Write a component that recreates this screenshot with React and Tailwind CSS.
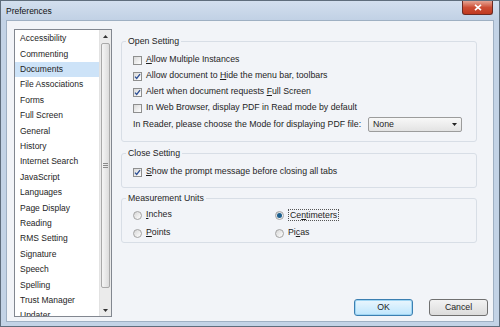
import React from "react";

const items = [
  "Accessibility",
  "Commenting",
  "Documents",
  "File Associations",
  "Forms",
  "Full Screen",
  "General",
  "History",
  "Internet Search",
  "JavaScript",
  "Languages",
  "Page Display",
  "Reading",
  "RMS Setting",
  "Signature",
  "Speech",
  "Spelling",
  "Trust Manager",
  "Updater",
];

function Check({ checked }) {
  return (
    <span className="w-[9px] h-[9px] shrink-0 border border-[#8e8f8f] bg-linear-to-br from-[#d9d9d9] to-white flex items-center justify-center">
      {checked && (
        <svg width="7" height="7" viewBox="0 0 7 7">
          <path d="M1 3.6 L2.7 5.4 L6 1.2" stroke="#2b4f96" strokeWidth="1.3" fill="none" />
        </svg>
      )}
    </span>
  );
}

function Radio({ checked }) {
  return (
    <span className="w-[9px] h-[9px] shrink-0 rounded-full border border-[#a3a3a3] bg-linear-to-br from-[#d6d6d6] to-white flex items-center justify-center">
      {checked && <span className="w-[5px] h-[5px] rounded-full bg-[#1d5f8e]" />}
    </span>
  );
}

function Row({ children, h = "h-[16px]" }) {
  return <div className={`${h} flex items-center gap-[4px]`}>{children}</div>;
}

function Group({ title, className, children }) {
  return (
    <fieldset className={`w-[356px] border border-[#d8dee6] rounded-[3px] pl-[4px] ${className}`}>
      <legend className="px-[2px] leading-[12px] text-[#1e1e1e]">{title}</legend>
      {children}
    </fieldset>
  );
}

function U({ children }) {
  return <span className="underline underline-offset-[1px]">{children}</span>;
}

export default function App() {
  return (
    <div
      className="w-[500px] h-[327px] bg-[#c3d3e6] border border-[#5f6d7c] flex flex-col overflow-hidden text-[#1e1e1e]"
      style={{ fontFamily: '"Liberation Sans", Arial, sans-serif' }}
    >
      {/* title bar */}
      <div className="h-[19px] flex items-center justify-between pl-[5px] pr-[6px] bg-linear-to-b from-[#d3dfee] to-[#c1d1e5]">
        <span className="text-[8.5px] text-[#111] pt-[1px]">Preferences</span>
        <div className="self-start w-[31px] h-[14px] rounded-b-[3px] border border-t-0 border-[#6b2a22] bg-linear-to-b from-[#e4a393] via-[#cc4d34] to-[#c0391f] flex items-center justify-center">
          <svg width="8" height="7" viewBox="0 0 8 7">
            <path d="M1 0.8 L7 6.2 M7 0.8 L1 6.2" stroke="white" strokeWidth="1.6" />
          </svg>
        </div>
      </div>

      {/* client area */}
      <div className="mx-[5px] h-[302px] bg-[#f2f4f8] border border-[#9fb0c3] flex pl-[7px] pt-[8px] text-[8.5px]">
        {/* list box */}
        <div className="w-[98px] h-[288px] border border-[#828790] bg-white flex">
          <div className="w-[84px] pt-[1px] overflow-hidden">
            {items.map((it) => (
              <div
                key={it}
                className={`h-[15.4px] flex items-center pl-[5px] whitespace-nowrap ${
                  it === "Documents" ? "bg-[#cde3f8]" : ""
                }`}
              >
                {it}
              </div>
            ))}
          </div>
          {/* scrollbar */}
          <div className="w-[12px] bg-[#ebebeb] border-l border-[#e2e2e2] flex flex-col">
            <div className="h-[12px] flex items-center justify-center">
              <svg width="5" height="3" viewBox="0 0 5 3">
                <path d="M0 3 L2.5 0 L5 3 Z" fill="#333" />
              </svg>
            </div>
            <div className="mt-[1px] mx-[1px] h-[245px] rounded-[2px] border border-[#a9a9a9] bg-linear-to-r from-[#f5f5f5] to-[#dcdcdc] flex flex-col items-center justify-center gap-[1px]">
              <span className="w-[5px] h-px bg-[#8a8a8a]" />
              <span className="w-[5px] h-px bg-[#8a8a8a]" />
              <span className="w-[5px] h-px bg-[#8a8a8a]" />
            </div>
            <div className="flex-1" />
            <div className="h-[12px] flex items-center justify-center">
              <svg width="5" height="3" viewBox="0 0 5 3">
                <path d="M0 0 L2.5 3 L5 0 Z" fill="#333" />
              </svg>
            </div>
          </div>
        </div>

        {/* right column */}
        <div className="w-[367px] h-[288px] ml-[9px] flex flex-col text-[8.75px]">
          <Group title="Open Setting" className="mt-[6px] pb-[8px]">
            <div className="ml-[7px] pt-[5px]">
              <Row>
                <Check />
                <span><U>A</U>llow Multiple Instances</span>
              </Row>
              <Row>
                <Check checked />
                <span>Allow document to <U>H</U>ide the menu bar, toolbars</span>
              </Row>
              <Row>
                <Check checked />
                <span>Alert when document requests <U>F</U>ull Screen</span>
              </Row>
              <Row>
                <Check />
                <span>In Web Browser, display PDF in Read mode by default</span>
              </Row>
              <div className="h-[17px] flex items-center">
                <span className="w-[235px] whitespace-nowrap">
                  In Reader, please choose the Mode for displaying PDF file:
                </span>
                <div className="w-[94px] h-[15px] border border-[#9c9c9c] rounded-[2px] bg-linear-to-b from-[#f8f8f8] to-[#e3e3e3] flex items-center justify-between pl-[4px] pr-[4px]">
                  <span>None</span>
                  <svg width="5" height="3" viewBox="0 0 5 3">
                    <path d="M0 0 L2.5 3 L5 0 Z" fill="#222" />
                  </svg>
                </div>
              </div>
            </div>
          </Group>

          <Group title="Close Setting" className="mt-[5px] pb-[7px]">
            <div className="ml-[7px] pt-[5px]">
              <Row>
                <Check checked />
                <span><U>S</U>how the prompt message before closing all tabs</span>
              </Row>
            </div>
          </Group>

          <Group title="Measurement Units" className="mt-[4px]">
            <div className="ml-[7px] pt-[2px] grid grid-cols-[142px_1fr]">
              <Row h="h-[18px]">
                <Radio />
                <span><U>I</U>nches</span>
              </Row>
              <Row h="h-[18px]">
                <Radio checked />
                <span className="border border-dotted border-[#555] px-[1px] leading-[10px]">
                  Ce<U>n</U>timeters
                </span>
              </Row>
              <Row h="h-[18px]">
                <Radio />
                <span><U>P</U>oints</span>
              </Row>
              <Row h="h-[18px]">
                <Radio />
                <span>Pi<U>c</U>as</span>
              </Row>
            </div>
          </Group>

          <div className="mt-auto mb-[1px] flex justify-end gap-[16px]">
            <button className="w-[59px] h-[17px] rounded-[3px] border border-[#3c7fb1] bg-linear-to-b from-[#eaf6fd] to-[#bee6fd] shadow-[inset_0_0_0_1px_#9fd5f3] text-[8.75px]">
              OK
            </button>
            <button className="w-[59px] h-[17px] rounded-[3px] border border-[#707070] bg-linear-to-b from-[#f2f2f2] to-[#dcdcdc] text-[8.75px]">
              Cancel
            </button>
          </div>
        </div>
      </div>
    </div>
  );
}
